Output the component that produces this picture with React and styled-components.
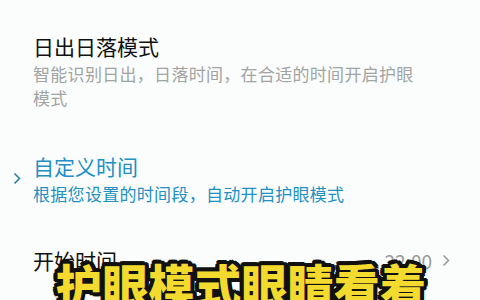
import styled, { createGlobalStyle } from 'styled-components';

const Global = createGlobalStyle`
  html, body {
    margin: 0;
    padding: 0;
    background: #fafdfb;
  }
  body {
    font-family: "Noto Sans CJK SC", "Noto Sans", sans-serif;
    overflow: hidden;
  }
`;

const Screen = styled.div`
  position: relative;
  width: 480px;
  height: 300px;
  overflow: hidden;
  background: #fafdfb;
`;

const List = styled.div`
  display: flex;
  flex-direction: column;
  padding: 32px 0 0 33px;
`;

const Option = styled.div`
  position: relative;
  display: flex;
  flex-direction: column;
  margin-bottom: ${props => props.gap || 0}px;
`;

const Title = styled.div`
  font-size: 21px;
  line-height: 28px;
  color: ${props => (props.active ? '#2290c4' : '#111')};
`;

const Desc = styled.div`
  width: 392px;
  margin-top: 2px;
  font-size: 17px;
  line-height: 24px;
  letter-spacing: 0.3px;
  color: ${props => (props.active ? '#2290c4' : '#a2a4a3')};
`;

// 선택된 항목 앞의 작은 화살표
const Marker = styled.svg`
  position: absolute;
  left: -20px;
  top: 20px;
  width: 8px;
  height: 13px;
`;

const Row = styled.div`
  display: flex;
  align-items: center;
  padding-right: 30px;
`;

const Value = styled.div`
  margin-left: auto;
  font-size: 19px;
  color: #9a9a9a;
  margin-right: 10px;
`;

const Caption = styled.div`
  position: absolute;
  left: 56px;
  top: 258px;
  font-size: 46px;
  line-height: 50px;
  font-weight: 900;
  letter-spacing: 0.3px;
  color: #f2da2e;
  white-space: nowrap;
  text-shadow:
    -3px -3px 0 #111, 3px -3px 0 #111, -3px 3px 0 #111, 3px 3px 0 #111,
    0 -4px 0 #111, 0 4px 0 #111, -4px 0 0 #111, 4px 0 0 #111,
    -2px -4px 0 #111, 2px 4px 0 #111, -4px 2px 0 #111, 4px -2px 0 #111;
`;

const Chevron = ({ color, className }) => (
  <svg className={className} width="8" height="13" viewBox="0 0 8 13">
    <path d="M1.5 1.5 L6.5 6.5 L1.5 11.5" fill="none" stroke={color} strokeWidth="1.6" />
  </svg>
);

export default function App() {
  return (
    <Screen>
      <Global />
      <List>
        <Option gap={42}>
          <Title>日出日落模式</Title>
          <Desc>智能识别日出，日落时间，在合适的时间开启护眼模式</Desc>
        </Option>
        <Option gap={40}>
          <Marker viewBox="0 0 8 13">
            <path d="M1.5 1.5 L6.5 6.5 L1.5 11.5" fill="none" stroke="#2a7fa8" strokeWidth="1.6" />
          </Marker>
          <Title active>自定义时间</Title>
          <Desc active>根据您设置的时间段，自动开启护眼模式</Desc>
        </Option>
        <Row>
          <Title>开始时间</Title>
          <Value>22:00</Value>
          <Chevron color="#9a9a9a" />
        </Row>
      </List>
      <Caption>护眼模式眼睛看着</Caption>
    </Screen>
  );
}
